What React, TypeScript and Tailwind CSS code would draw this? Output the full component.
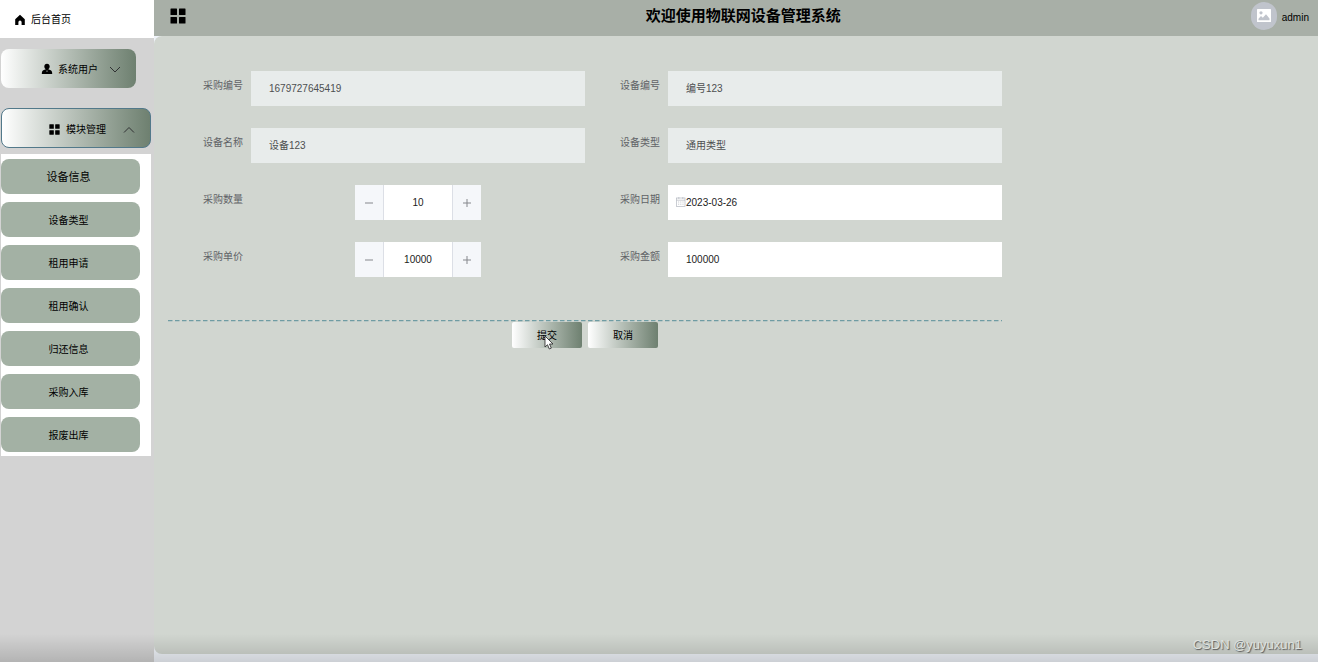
import { useState } from "react";
import type { ReactNode } from "react";

const MENU = ["设备信息", "设备类型", "租用申请", "租用确认", "归还信息", "采购入库", "报废出库"];

function HomeIcon() {
  return (
    <svg viewBox="0 0 12 12" className="size-3" aria-hidden="true">
      <path d="M6 .8 10.800 5.200V11H7.600V8.200a1.600 1.600 0 0 0-3.200 0V11H1.200V5.200z" fill="#000" />
    </svg>
  );
}

function UserIcon() {
  return (
    <svg viewBox="0 0 12 12" className="size-3" aria-hidden="true">
      <path
        d="M6 .8c1.700 0 2.700 1.200 2.700 2.700 0 1.200-.7 2.300-1.500 2.800l2.500 1C10.700 7.800 11.200 8.800 11.200 11H.8c0-2.200.5-3.200 1.500-3.700l2.500-1C4 5.800 3.300 4.700 3.300 3.500 3.300 2 4.300.8 6 .8z"
        fill="#000"
      />
      <path d="m5.300 7.300.7.600.7-.6-.3 1.500h-.8z" fill="#c8cfc8" />
    </svg>
  );
}

function GridIcon({ className }: { className: string }) {
  return (
    <svg viewBox="0 0 16 16" className={className} aria-hidden="true">
      <rect x="0.500" y="0.500" width="6.500" height="6.500" rx="0.500" />
      <rect x="9" y="0.500" width="6.500" height="6.500" rx="0.500" />
      <rect x="0.500" y="9" width="6.500" height="6.500" rx="0.500" />
      <rect x="9" y="9" width="6.500" height="6.500" rx="0.500" />
    </svg>
  );
}

function Chevron({ up }: { up?: boolean }) {
  return (
    <svg viewBox="0 0 12 12" className="size-3" fill="none" stroke="#303133" aria-hidden="true">
      <path d={up ? "M1 9.500 6 4.500l5 5" : "M1 4l5 5 5-5"} />
    </svg>
  );
}

function CalendarIcon() {
  return (
    <svg viewBox="0 0 10 10" className="mb-[2px] size-[10px] shrink-0" fill="none" stroke="#b4b8c0" strokeWidth="0.700" aria-hidden="true">
      <rect x="0.500" y="1" width="8.500" height="8.500" />
      <path d="M.5 3.200H9M2.800 0v2M6.800 0v2M2 5h1.200M4.200 5h1.200M6.400 5h1.200M2 7.200h1.200M4.200 7.200h1.200M6.400 7.200h1.200" />
    </svg>
  );
}

function Field({ id, label, children }: { id: string; label: string; children: ReactNode }) {
  return (
    <div className="flex h-[35px] items-stretch">
      <label htmlFor={id} className="w-[83px] shrink-0 pr-2 text-right leading-[30px] text-[#606266]">
        {label}
      </label>
      <div className="flex min-w-0 flex-1 justify-center">{children}</div>
    </div>
  );
}

function ReadOnly({ id, value }: { id: string; value: string }) {
  return <input id={id} readOnly value={value} className="w-full bg-[#e8eceb] px-[18px] text-[#4d4f50] outline-none" />;
}

function Stepper({ id, value, onChange }: { id: string; value: number; onChange: (n: number) => void }) {
  return (
    <div className="flex h-[35px] w-[126px] bg-white">
      <button type="button" aria-label="减少" onClick={() => onChange(value - 1)} className="flex w-[29px] items-center justify-center border-r border-[#dcdfe6] bg-[#f5f7fa]">
        <svg viewBox="0 0 8 8" className="size-2" stroke="#85878c" aria-hidden="true">
          <path d="M0 4h8" />
        </svg>
      </button>
      <input
        id={id}
        value={value}
        onChange={(e) => onChange(Number(e.target.value) || 0)}
        className="min-w-0 flex-1 text-center text-[#222] outline-none"
      />
      <button type="button" aria-label="增加" onClick={() => onChange(value + 1)} className="flex w-[29px] items-center justify-center border-l border-[#dcdfe6] bg-[#f5f7fa]">
        <svg viewBox="0 0 8 8" className="size-2" stroke="#85878c" aria-hidden="true">
          <path d="M0 4h8M4 0v8" />
        </svg>
      </button>
    </div>
  );
}

function Sidebar() {
  return (
    <aside className="w-[154px] shrink-0 bg-[#d3d3d3]">
      <a href="#home" className="flex h-[38px] items-center gap-[5px] bg-white pt-px pl-[14px]">
        <HomeIcon />
        后台首页
      </a>
      <nav className="mr-[3px] ml-px">
        <button type="button" className="mt-[11px] flex h-[39px] w-[135px] items-center rounded-lg bg-linear-to-r from-white to-[#6e8070] pt-px pl-10">
          <UserIcon />
          <span className="mr-[11px] ml-[5px]">系统用户</span>
          <Chevron />
        </button>
        <button
          type="button"
          aria-expanded="true"
          className="mt-5 flex h-10 w-full items-center rounded-lg border border-[#52798a] bg-linear-to-r from-white to-[#6e8070] pt-[2px] pl-[47px]"
        >
          <GridIcon className="size-[11px]" />
          <span className="mr-[17px] ml-[6px]">模块管理</span>
          <Chevron up />
        </button>
        <ul className="mt-[6px] flex flex-col gap-2 bg-white pt-[5px] pr-[11px] pb-1">
          {MENU.map((item, i) => (
            <li key={item}>
              <a
                href={`#menu-${i + 1}`}
                className={`flex h-[35px] items-center justify-center rounded-lg bg-[#a3b1a4] pt-[2px] pr-1 ${i === 0 ? "text-[11px]" : ""}`}
              >
                {item}
              </a>
            </li>
          ))}
        </ul>
      </nav>
    </aside>
  );
}

function PurchaseForm() {
  const [count, setCount] = useState(10);
  const [price, setPrice] = useState(10000);
  const [date, setDate] = useState("2023-03-26");
  return (
    <form className="max-w-[834px]" onSubmit={(e) => e.preventDefault()}>
      <div className="grid grid-cols-2 gap-y-[22px]">
        <Field id="order" label="采购编号"><ReadOnly id="order" value="1679727645419" /></Field>
        <Field id="device" label="设备编号"><ReadOnly id="device" value="编号123" /></Field>
        <Field id="name" label="设备名称"><ReadOnly id="name" value="设备123" /></Field>
        <Field id="type" label="设备类型"><ReadOnly id="type" value="通用类型" /></Field>
        <Field id="count" label="采购数量"><Stepper id="count" value={count} onChange={setCount} /></Field>
        <Field id="date" label="采购日期">
          <div className="flex w-full items-center bg-white pl-2">
            <CalendarIcon />
            <input id="date" value={date} onChange={(e) => setDate(e.target.value)} className="h-full min-w-0 flex-1 text-[#222] outline-none" />
          </div>
        </Field>
        <Field id="price" label="采购单价"><Stepper id="price" value={price} onChange={setPrice} /></Field>
        <Field id="total" label="采购金额">
          <input id="total" readOnly value={count * price} className="w-full bg-white px-[18px] text-[#222] outline-none" />
        </Field>
      </div>
      <svg className="mt-[43px] block h-[2px] w-full" aria-hidden="true">
        <line x1="0" y1="0.600" x2="100%" y2="0.600" stroke="#6f9ca3" strokeWidth="1.300" strokeDasharray="4.500 2.500" />
      </svg>
      <div className="flex justify-center gap-[6px]">
        <button type="submit" className="relative h-[26px] w-[70px] rounded-xs bg-linear-to-r from-white to-[#6e8070]">
          提交
          <svg viewBox="0 0 10 15" className="absolute top-[13px] left-8 h-[15px] w-[10px]" aria-hidden="true">
            <path d="M1 1v11l2.500-2.300L5.300 14l2-.9L5.500 9H9z" fill="#fff" stroke="#222" strokeWidth="0.800" />
          </svg>
        </button>
        <button type="button" className="h-[26px] w-[70px] rounded-xs bg-linear-to-r from-white to-[#6e8070]">取消</button>
      </div>
    </form>
  );
}

export default function App() {
  return (
    <div className="relative flex min-h-screen bg-[#f0f4fa] font-['Liberation_Sans','Noto_Sans_CJK_SC',sans-serif] text-[10px] text-black">
      <Sidebar />
      <div className="flex min-w-0 flex-1 flex-col pb-2">
        <header className="flex h-9 items-center bg-[#a8afa7] pr-[9px] pb-[5px] pl-4">
          <button type="button" aria-label="菜单"><GridIcon className="size-4" /></button>
          <h1 className="flex-1 pt-px pl-[50px] text-center text-[15px] font-bold">欢迎使用物联网设备管理系统</h1>
          <div className="flex items-center gap-[5px]">
            <span className="flex h-7 w-[26px] items-center justify-center rounded-full bg-[#c0c4cc]">
              <svg viewBox="0 0 14 13" className="h-[13px] w-[14px]" aria-hidden="true">
                <rect width="14" height="13" rx="0.500" fill="#fff" />
                <circle cx="4" cy="3.800" r="1.600" fill="#c0c4cc" />
                <path d="M1.500 11.300v-1.500L4 7l1.800 1.800L9 5.200l3.500 4.300v1.800z" fill="#c0c4cc" />
              </svg>
            </span>
            <span className="pt-1">admin</span>
          </div>
        </header>
        <main className="flex-1 rounded-l-lg bg-[#d1d6d0] px-[14px] pt-[35px]">
          <PurchaseForm />
        </main>
      </div>
      <div className="pointer-events-none absolute inset-x-0 bottom-0 h-7 bg-linear-to-b from-black/0 to-black/15" />
      <p className="absolute right-4 bottom-[9px] text-[13px] leading-4 text-[#dfe2df] [text-shadow:1px_1px_1px_#555]">CSDN @yuyuxun1</p>
    </div>
  );
}
